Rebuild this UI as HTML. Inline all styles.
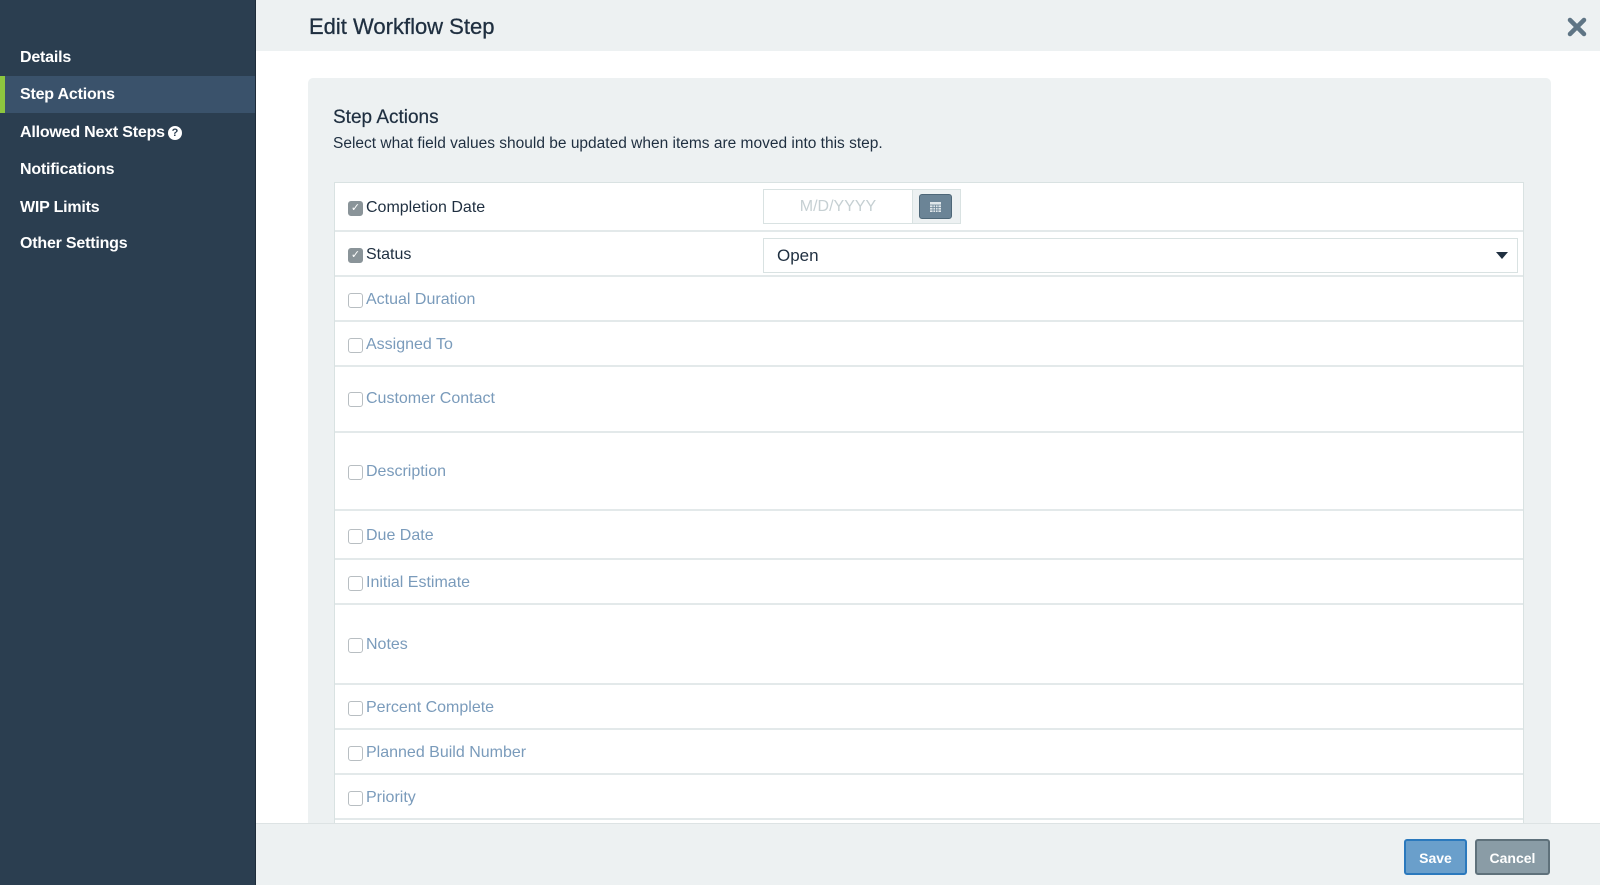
<!DOCTYPE html>
<html><head><meta charset="utf-8"><style>
*{box-sizing:border-box;margin:0;padding:0}
body{width:1600px;height:885px;overflow:hidden;font-family:"Liberation Sans",sans-serif;background:#fff;position:relative}
.side{position:absolute;left:0;top:0;width:256px;height:885px;background:#2b3e50;border-right:1px solid #1e2c3a}
.side div{position:absolute;left:0;width:255px;height:37px;line-height:37px;padding-left:20px;color:#fff;font-size:16px;font-weight:bold;letter-spacing:-0.2px}
.side .act{background:#3a526b;border-left:5px solid #8dc63f;padding-left:15px}
.q{display:inline-block;width:14px;height:14px;border-radius:50%;background:#fff;color:#2b3e50;font-size:11px;line-height:14px;text-align:center;vertical-align:1px;margin-left:3px}
.hdr{position:absolute;left:256px;top:0;width:1344px;height:51px;background:#edf1f2}
.hdr h1{position:absolute;left:53px;top:14px;font-size:22px;font-weight:normal;color:#1f2f40;-webkit-text-stroke:0.3px #1f2f40}
.x{position:absolute;left:1567px;top:17px}
.panel{position:absolute;left:308px;top:78px;width:1243px;height:760px;background:#edf1f2;border-radius:5px}
.panel h2{position:absolute;left:25px;top:29px;font-size:19px;font-weight:normal;color:#1f2f40;-webkit-text-stroke:0.2px #1f2f40}
.panel p{position:absolute;left:25px;top:57px;font-size:15.5px;color:#1f2f40}
.tbl{position:absolute;left:334px;top:182px;width:1190px;height:660px;background:#fff;border:1px solid #d9e2e2;border-bottom:none}
.row{position:absolute;left:0;width:1188px;border-bottom:2px solid #e3e9ea}
.lab{position:absolute;left:13px;font-size:16px;color:#7a9bbb;display:flex;align-items:center;margin-top:2px}
.lab.on{color:#1f2f40}
.cb{width:15px;height:15px;border:1px solid #b8bec2;border-radius:3px;margin-right:3px;background:#fff}
.cb.c{background:#8a9499;border-color:#8a9499;color:#fff;font-size:11px;text-align:center;line-height:13px}
.foot{position:absolute;left:256px;top:823px;width:1344px;height:62px;background:#edf1f2;border-top:1px solid #dde3e4}
.btn{position:absolute;top:15px;height:36px;border-radius:3px;color:#fff;font-weight:bold;font-size:14px;text-align:center;line-height:34px}
</style></head><body>
<div class="side">
<div style="top:39px">Details</div>
<div class="act" style="top:76px">Step Actions</div>
<div style="top:114px">Allowed Next Steps<span class="q">?</span></div>
<div style="top:151px">Notifications</div>
<div style="top:189px">WIP Limits</div>
<div style="top:225px">Other Settings</div>
</div>
<div class="hdr"><h1>Edit Workflow Step</h1></div>
<svg class="x" width="20" height="20" viewBox="0 0 20 20"><path d="M3 3L17 17M17 3L3 17" stroke="#5f7585" stroke-width="4.5" stroke-linecap="round"/></svg>
<div class="panel"><h2>Step Actions</h2><p>Select what field values should be updated when items are moved into this step.</p></div>
<div class="tbl">
<div class="row" style="top:0;height:49px"><div class="lab on" style="top:14px"><span class="cb c">✓</span>Completion Date</div>
<div style="position:absolute;left:428px;top:6px;width:150px;height:35px;border:1px solid #d9e2e2;color:#c6d0d3;font-size:16px;line-height:33px;text-align:center">M/D/YYYY</div>
<div style="position:absolute;left:577px;top:6px;width:49px;height:35px;border:1px solid #d9e2e2;background:#edf1f2"><div style="position:absolute;left:6px;top:4px;width:33px;height:25px;background:#6b8496;border:1px solid #4e6778;border-radius:3px"><svg width="31" height="23" viewBox="0 0 31 23"><rect x="10" y="7" width="11" height="10" fill="#dfe6ea"/><path d="M10 10h11M10 12.5h11M10 15h11M13 10v7M15.5 10v7M18 10v7" stroke="#6b8496" stroke-width=".8"/></svg></div></div></div>
<div class="row" style="top:49px;height:45px"><div class="lab on" style="top:12px"><span class="cb c">✓</span>Status</div>
<div style="position:absolute;left:428px;top:6px;width:755px;height:35px;border:1px solid #d9e2e2;font-size:17px;color:#1f2f40;line-height:33px;padding-left:13px">Open<svg style="position:absolute;right:9px;top:13px" width="12" height="7"><path d="M0 0h12L6 7z" fill="#1f2f40"/></svg></div></div>
<div class="row" style="top:94px;height:45px"><div class="lab" style="top:12px"><span class="cb"></span>Actual Duration</div></div>
<div class="row" style="top:139px;height:45px"><div class="lab" style="top:12px"><span class="cb"></span>Assigned To</div></div>
<div class="row" style="top:184px;height:66px"><div class="lab" style="top:21px"><span class="cb"></span>Customer Contact</div></div>
<div class="row" style="top:250px;height:78px"><div class="lab" style="top:28px"><span class="cb"></span>Description</div></div>
<div class="row" style="top:328px;height:49px"><div class="lab" style="top:14px"><span class="cb"></span>Due Date</div></div>
<div class="row" style="top:377px;height:45px"><div class="lab" style="top:12px"><span class="cb"></span>Initial Estimate</div></div>
<div class="row" style="top:422px;height:80px"><div class="lab" style="top:29px"><span class="cb"></span>Notes</div></div>
<div class="row" style="top:502px;height:45px"><div class="lab" style="top:12px"><span class="cb"></span>Percent Complete</div></div>
<div class="row" style="top:547px;height:45px"><div class="lab" style="top:12px"><span class="cb"></span>Planned Build Number</div></div>
<div class="row" style="top:592px;height:45px"><div class="lab" style="top:12px"><span class="cb"></span>Priority</div></div>
</div>
<div class="foot">
<div class="btn" style="left:1148px;width:63px;background:#6a9fcb;border:2px solid #2b79bd">Save</div>
<div class="btn" style="left:1219px;width:75px;background:#8a9ca6;border:2px solid #5f717b">Cancel</div>
</div>
</body></html>
